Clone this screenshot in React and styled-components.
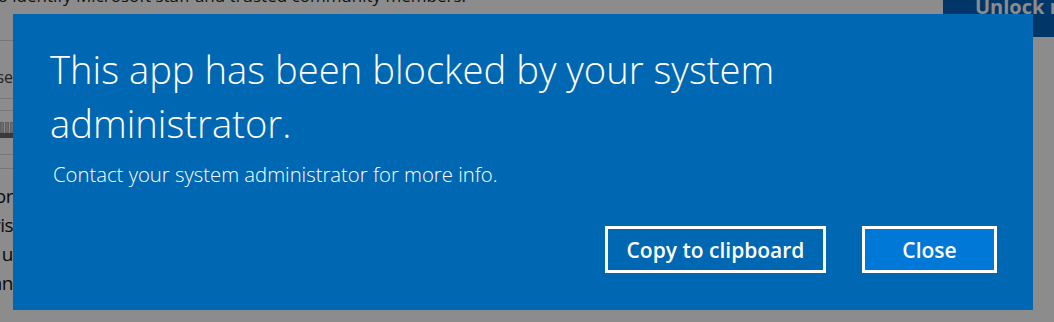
import React from "react";
import styled, { createGlobalStyle } from "styled-components";

const GlobalStyle = createGlobalStyle`
  html, body {
    margin: 0;
    padding: 0;
    background: #ffffff;
  }
  #root {
    width: 1054px;
    height: 322px;
  }
`;

const sideLines = ["for", "Paris", "you u", "can"];

function App() {
  return (
    <>
      <GlobalStyle />
      <Screen>
        <Page>
          <Intro>
            <span>used to identify Microsoft staff and trusted community members.</span>
          </Intro>
          <PageBody>
            <SideColumn>
              <SideRule />
              <SideLabel>Use</SideLabel>
              <SideRule $gap={11} />
              <SideRule />
              <Grid>
                {Array.from({ length: 4 }).map((_, i) => (
                  <GridCell key={i} />
                ))}
              </Grid>
              <DarkBar />
              <SideRule $gap={13} />
              <SideRule />
              <SideText>
                {sideLines.map((line) => (
                  <span key={line}>{line}</span>
                ))}
              </SideText>
            </SideColumn>
            <Filler />
            <RightColumn>
              <UnlockButton>Unlock now</UnlockButton>
            </RightColumn>
          </PageBody>
        </Page>

        <Overlay>
          <Dialog role="alertdialog">
            <Title>This app has been blocked by your system administrator.</Title>
            <Message>Contact your system administrator for more info.</Message>
            <Actions>
              <DialogButton>Copy to clipboard</DialogButton>
              <DialogButton $primary>Close</DialogButton>
            </Actions>
          </Dialog>
        </Overlay>
      </Screen>
    </>
  );
}

export default App;

const Screen = styled.div`
  position: relative;
  width: 1054px;
  height: 322px;
  overflow: hidden;
  font-family: "Open Sans", "Noto Sans", sans-serif;
`;

const Page = styled.div`
  display: flex;
  flex-direction: column;
  height: 100%;
  background: #ffffff;
`;

const Intro = styled.div`
  height: 0;
  width: 466px;
  display: flex;
  justify-content: flex-end;
  font-size: 17px;
  color: #1e1e1e;
  white-space: nowrap;

  span {
    display: block;
    line-height: 22px;
    margin-top: -15px;
  }
`;

const PageBody = styled.div`
  flex: 1;
  display: flex;
`;

const SideColumn = styled.div`
  width: 13px;
  display: flex;
  flex-direction: column;
  padding-top: 40px;
`;

const SideRule = styled.div`
  height: 1px;
  flex-shrink: 0;
  background: #d9d9d9;
  margin-bottom: ${(p) => (p.$gap ? `${p.$gap}px` : "0")};
`;

const SideLabel = styled.div`
  height: 57px;
  display: flex;
  justify-content: flex-end;
  align-items: center;
  font-size: 16px;
  color: #444444;
  white-space: nowrap;
  padding-top: 14px;
  box-sizing: border-box;
`;

const Grid = styled.div`
  display: grid;
  grid-template-columns: repeat(4, 4px);
  gap: 1px;
  height: 11px;
  margin-top: 11px;
`;

const GridCell = styled.div`
  background: #c4c4c4;
  border: 1px solid #b0b0b0;
`;

const DarkBar = styled.div`
  height: 5px;
  background: #6a6a6a;
  margin-bottom: 16px;
`;

const SideText = styled.div`
  display: flex;
  flex-direction: column;
  align-items: flex-end;
  padding-top: 13px;
  font-size: 19px;
  line-height: 29px;
  letter-spacing: -0.5px;
  color: #141414;
  white-space: nowrap;
`;

const Filler = styled.div`
  flex: 1;
`;

const RightColumn = styled.div`
  width: 111px;
  display: flex;
  flex-direction: column;
`;

const UnlockButton = styled.div`
  margin-top: -22px;
  height: 59px;
  box-sizing: border-box;
  padding: 17px 0 0 32px;
  background: #0064bd;
  color: #ffffff;
  font-size: 20px;
  font-weight: 700;
  line-height: 24px;
  white-space: nowrap;
`;

const Overlay = styled.div`
  position: absolute;
  inset: 0;
  background: rgba(0, 0, 0, 0.45);
  display: flex;
  align-items: flex-start;
  padding: 14px 21px 12px 13px;
`;

const Dialog = styled.div`
  width: 1020px;
  height: 296px;
  box-sizing: border-box;
  background: #0067b2;
  color: #ffffff;
  padding: 28px 36px 37px 37px;
  display: flex;
  flex-direction: column;
`;

const Title = styled.h1`
  margin: 0;
  width: 780px;
  font-size: 38.2px;
  font-weight: 300;
  line-height: 54px;
`;

const Message = styled.p`
  margin: 12px 0 0 3px;
  font-size: 20.3px;
  font-weight: 300;
  line-height: 24px;
`;

const Actions = styled.div`
  margin-top: auto;
  display: flex;
  justify-content: flex-end;
  gap: 36px;
`;

const DialogButton = styled.button`
  height: 47px;
  min-width: ${(p) => (p.$primary ? "135px" : "221px")};
  box-sizing: border-box;
  border: 3px solid #ffffff;
  background: ${(p) => (p.$primary ? "#0078d7" : "#0067b2")};
  color: #ffffff;
  font-family: "Open Sans", "Noto Sans", sans-serif;
  font-size: 21px;
  font-weight: 600;
  padding: 0 16px;
`;
